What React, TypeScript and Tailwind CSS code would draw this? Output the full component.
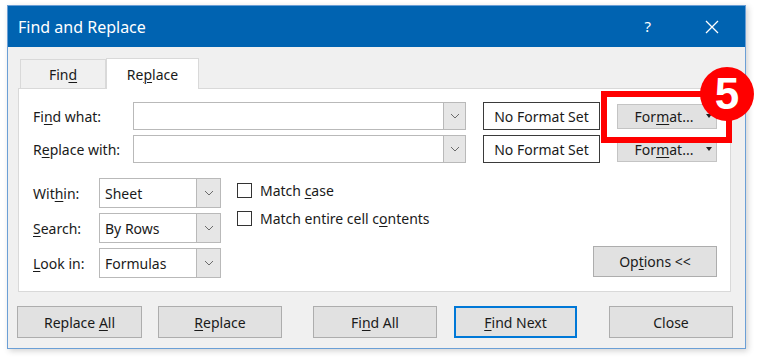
import React from 'react';

const font = { fontFamily: '"Noto Sans", "Open Sans", sans-serif' };

function U({ children }: { children: React.ReactNode }) {
  return <span className="underline underline-offset-2 decoration-1">{children}</span>;
}

function Chevron() {
  return (
    <svg width="10" height="6" viewBox="0 0 10 6" fill="none">
      <path d="M1 1l4 4 4-4" stroke="#6b6b6b" strokeWidth="1" />
    </svg>
  );
}

function Combo({ width }: { width: string }) {
  return (
    <div className={`flex h-[28px] ${width} border border-[#b9b9b9] bg-white`}>
      <div className="flex-1" />
      <div className="flex w-[22px] items-center justify-center border-l border-[#b9b9b9] bg-[#e6e6e6]">
        <Chevron />
      </div>
    </div>
  );
}

function Select({ value }: { value: string }) {
  return (
    <div className="flex h-[30px] w-[122px] border border-[#b9b9b9] bg-white">
      <div className="flex flex-1 items-center pl-[5px] text-[14px] text-[#1a1a1a]">{value}</div>
      <div className="flex w-[24px] items-center justify-center border-l border-[#b9b9b9] bg-[#e6e6e6]">
        <Chevron />
      </div>
    </div>
  );
}

function Btn({
  children,
  className = '',
  border = 'border border-[#adadad]',
}: {
  children: React.ReactNode;
  className?: string;
  border?: string;
}) {
  return (
    <div className={`flex items-center justify-center bg-[#e1e1e1] text-[14px] text-[#1a1a1a] ${border} ${className}`}>
      <span>{children}</span>
    </div>
  );
}

function FormatBtn() {
  return (
    <div className="relative flex h-[25px] w-[100px] items-center justify-center border border-[#c4c4c4] bg-[#e1e1e1] text-[14px] text-[#1a1a1a]">
      <span className="mr-[6px]">
        For<U>m</U>at...
      </span>
      <span className="absolute right-[4px] top-[9px] h-0 w-0 border-x-[3px] border-t-[4px] border-x-transparent border-t-[#222]" />
    </div>
  );
}

function NoFormat() {
  return (
    <div className="flex h-[28px] w-[117px] items-center justify-center border border-[#3a3a3a] bg-white text-[14px] text-[#1a1a1a]">
      No Format Set
    </div>
  );
}

function Check({ children }: { children: React.ReactNode }) {
  return (
    <div className="flex items-center gap-[8px] text-[14px] text-[#1a1a1a]">
      <div className="h-[15px] w-[15px] border border-[#333] bg-white" />
      <span>{children}</span>
    </div>
  );
}

export default function App() {
  return (
    <div className="relative h-[357px] w-[768px] overflow-hidden bg-white" style={font}>
      <div className="ml-[7px] mt-[5px] w-[739px] border border-[#6b9fd6] shadow-[2px_2px_6px_rgba(0,0,0,0.18)]">
        <div className="flex h-[41px] items-center bg-[#0063b1] pl-[10px] text-white">
          <span className="text-[16px]">Find and Replace</span>
          <span className="ml-auto mr-[54px] text-[15px]">?</span>
          <svg width="14" height="14" viewBox="0 0 14 14" className="mr-[26px]">
            <path d="M1 1l12 12M13 1L1 13" stroke="white" strokeWidth="1.3" />
          </svg>
        </div>

        <div className="bg-[#f0f0f0] pb-[10px] pt-[11px]">
          <div className="ml-[10px] w-[713px]">
            <div className="flex items-end pl-[2px]">
              <div className="flex h-[29px] w-[86px] items-center justify-center border-x border-t border-[#d9d9d9] bg-[#f0f0f0] text-[14px] text-[#1a1a1a]">
                <span>
                  Fin<U>d</U>
                </span>
              </div>
              <div className="-mb-px relative z-10 flex h-[31px] w-[93px] items-center justify-center border-x border-t border-[#d9d9d9] bg-white text-[14px] text-[#1a1a1a]">
                <span>
                  Re<U>p</U>lace
                </span>
              </div>
            </div>
            <div className="h-[204px] border border-[#d9d9d9] bg-white pl-[14px] pr-[13px] pt-[13px]">
              <div className="flex items-center">
                <div className="w-[100px] text-[14px] text-[#1a1a1a]">
                  Fi<U>n</U>d what:
                </div>
                <Combo width="w-[333px]" />
                <div className="ml-[17px]">
                  <NoFormat />
                </div>
                <div className="ml-[17px]">
                  <FormatBtn />
                </div>
              </div>
              <div className="mt-[5px] flex items-center">
                <div className="w-[100px] text-[14px] text-[#1a1a1a]">
                  R<U>e</U>place with:
                </div>
                <Combo width="w-[333px]" />
                <div className="ml-[17px]">
                  <NoFormat />
                </div>
                <div className="ml-[17px]">
                  <FormatBtn />
                </div>
              </div>

              <div className="mt-[15px] flex">
                <div className="flex flex-col gap-[5px]">
                  {[
                    { label: <>Wit<U>h</U>in:</>, value: 'Sheet' },
                    { label: <><U>S</U>earch:</>, value: 'By Rows' },
                    { label: <><U>L</U>ook in:</>, value: 'Formulas' },
                  ].map((r) => (
                    <div key={r.value} className="flex items-center">
                      <div className="w-[66px] text-[14px] text-[#1a1a1a]">{r.label}</div>
                      <Select value={r.value} />
                    </div>
                  ))}
                </div>
                <div className="ml-[16px] flex flex-col gap-[7px] pt-[2px]">
                  <Check>
                    Match <U>c</U>ase
                  </Check>
                  <Check>
                    Match entire cell c<U>o</U>ntents
                  </Check>
                </div>
                <div className="ml-auto flex items-end">
                  <Btn className="mb-[1px] h-[31px] w-[124px]">
                    Op<U>t</U>ions &lt;&lt;
                  </Btn>
                </div>
              </div>
            </div>
          </div>

          <div className="mt-[14px] flex pl-[9px]">
            <Btn className="h-[32px] w-[125px]">
              Replace <U>A</U>ll
            </Btn>
            <Btn className="ml-[16px] h-[32px] w-[124px]">
              <U>R</U>eplace
            </Btn>
            <Btn className="ml-[31px] h-[32px] w-[124px]">
              Fi<U>n</U>d All
            </Btn>
            <Btn className="ml-[17px] h-[32px] w-[123px]" border="border-2 border-[#0078d7]">
              <U>F</U>ind Next
            </Btn>
            <Btn className="ml-[32px] h-[32px] w-[124px]">Close</Btn>
          </div>
        </div>
      </div>

      <div className="absolute left-[601px] top-[91px] h-[52px] w-[131px] border-[6px] border-[#ff0000]" />
      <div
        className="absolute left-[700px] top-[67px] flex h-[54px] w-[54px] items-center justify-center rounded-full bg-[#ff0000] text-[44px] font-bold leading-none text-white"
        style={{ fontFamily: '"Liberation Sans", Arial, sans-serif' }}
      >
        5
      </div>
    </div>
  );
}
